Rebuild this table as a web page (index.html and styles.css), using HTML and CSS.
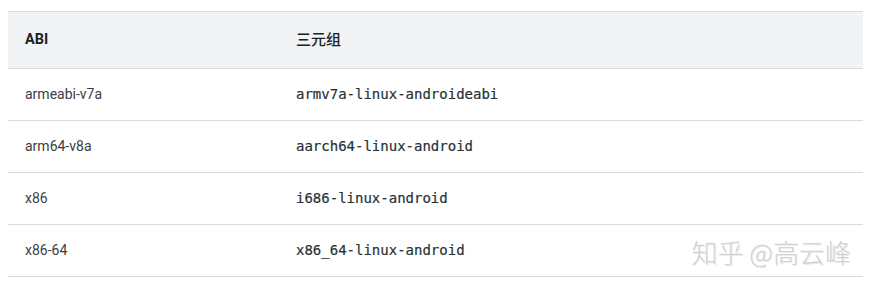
FILE: index.html
```html
<!DOCTYPE html>
<html>
<head>
<meta charset="utf-8">
<link rel="stylesheet" href="styles.css">
</head>
<body>
<div class="table">
  <div class="row head">
    <div class="cell">ABI</div>
    <div class="cell cjk">三元组</div>
  </div>
  <div class="row">
    <div class="cell">armeabi-v7a</div>
    <div class="cell code">armv7a-linux-androideabi</div>
  </div>
  <div class="row">
    <div class="cell">arm64-v8a</div>
    <div class="cell code">aarch64-linux-android</div>
  </div>
  <div class="row">
    <div class="cell">x86</div>
    <div class="cell code">i686-linux-android</div>
  </div>
  <div class="row">
    <div class="cell">x86-64</div>
    <div class="cell code">x86_64-linux-android</div>
  </div>
  <div class="watermark">知乎 @高云峰</div>
</div>
</body>
</html>
```
FILE: styles.css
```css
html, body {
  margin: 0;
  background: #ffffff;
}
body {
  padding: 11px 11px 0 8px;
  font-family: Roboto, "Noto Sans CJK SC", sans-serif;
  font-size: 14px;
  color: #3c4043;
}
.table {
  position: relative;
  border-top: 1px solid #dadce0;
}
.row {
  display: grid;
  grid-template-columns: 271px 1fr;
  height: 51px;
  align-items: center;
  border-bottom: 1px solid #dadce0;
}
.row.head {
  height: 56px;
  background: #f1f3f4;
  font-weight: 700;
  font-size: 14.5px;
  color: #202124;
}
.row.head .cjk {
  font-family: "Noto Sans CJK SC", sans-serif;
  font-weight: 500;
  font-size: 15px;
  padding-bottom: 3px;
}
.cell {
  padding-left: 17px;
  padding-bottom: 1px;
}
.code {
  font-family: "DejaVu Sans Mono", monospace;
  font-size: 14px;
  color: #263238;
  -webkit-text-stroke: 0.2px #263238;
}
.watermark {
  position: absolute;
  right: 12px;
  top: 221px;
  font-family: "Noto Sans CJK SC", sans-serif;
  font-size: 26px;
  font-weight: 300;
  color: #d2d2d2;
  text-shadow: 1px 1px 0 #ededed;
}
```
